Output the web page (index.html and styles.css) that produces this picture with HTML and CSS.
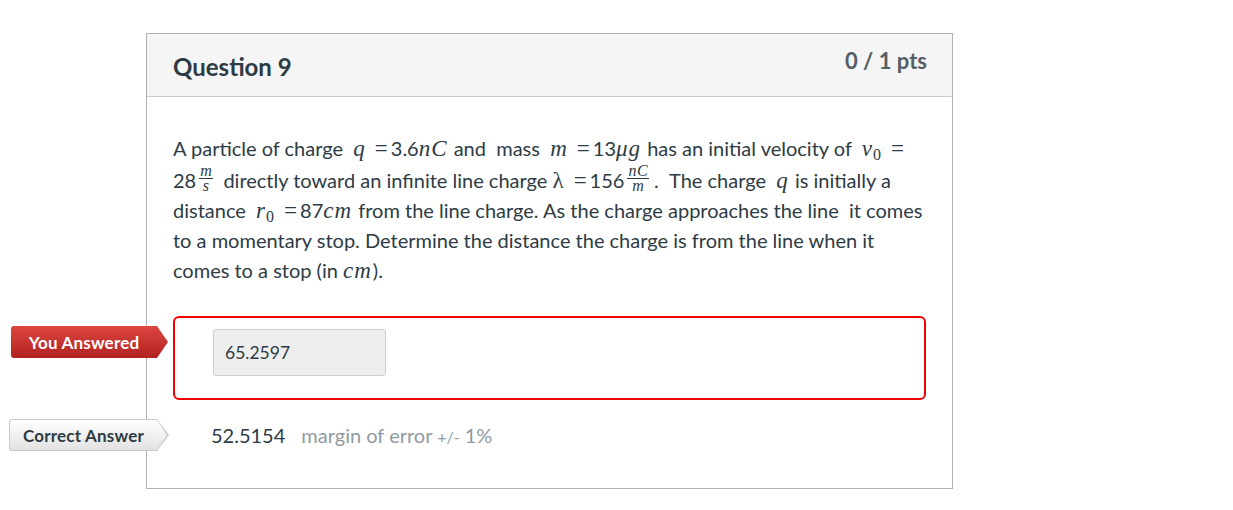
FILE: index.html
```html
<!DOCTYPE html>
<html>
<head>
<meta charset="utf-8">
<link rel="stylesheet" href="styles.css">
</head>
<body>
<div class="card">
  <div class="card-header">
    <h2 class="title">Question 9</h2>
    <div class="pts">0 / 1 pts</div>
  </div>
  <div class="card-body">
    <p class="question">A particle of charge &nbsp;<span class="m">q</span><span class="eq">=</span>3.6<span class="m">nC</span> and &nbsp;mass &nbsp;<span class="m">m</span><span class="eq">=</span>13<span class="m">μg</span> has an initial velocity of &nbsp;<span class="m">v<sub class="sub">0</sub></span><span class="eq">=</span><br>28<span class="frac"><span class="num m">m</span><span class="den m">s</span></span> directly toward an infinite line charge <span class="m up">λ</span><span class="eq">=</span>156<span class="frac"><span class="num m">nC</span><span class="den m">m</span></span>. &nbsp;The charge &nbsp;<span class="m">q</span> is initially a<br>distance &nbsp;<span class="m">r<sub class="sub">0</sub></span><span class="eq">=</span>87<span class="m">cm</span> from the line charge. As the charge approaches the line &nbsp;it comes<br>to a momentary stop. Determine the distance the charge is from the line when it<br>comes to a stop (in <span class="m">cm</span>).</p>

    <div class="answer-row">
      <span class="badge badge-wrong">You Answered</span>
      <div class="answer-box">
        <div class="input">65.2597</div>
      </div>
    </div>

    <div class="answer-row correct-row">
      <span class="badge badge-correct">Correct Answer</span>
      <div class="correct">
        <span class="value">52.5154</span>
        <span class="margin">margin of error <span class="pm">+/-</span> 1%</span>
      </div>
    </div>
  </div>
</div>
</body>
</html>
```

FILE: styles.css
```css
* { box-sizing: border-box; }
html, body { margin: 0; padding: 0; background: #fff; }
body {
  font-family: Lato, "Open Sans", sans-serif;
  color: #2d3b45;
  padding: 33px 0 0 146px;
}
.card {
  width: 807px;
  border: 1px solid #aeb2b5;
}
.card-header {
  display: flex;
  justify-content: space-between;
  align-items: flex-start;
  background: #f5f5f5;
  border-bottom: 1px solid #c7cdd1;
  height: 63px;
  padding: 0 25px 0 26px;
}
.title {
  margin: 0;
  font-size: 24px;
  font-weight: bold;
  line-height: 66px;
}
.pts {
  font-size: 22px;
  font-weight: bold;
  color: #555e65;
  margin-top: 13px;
}
.card-body {
  padding: 36px 26px 37px 26px;
}
.question {
  margin: 0;
  font-size: 20px;
  line-height: 30px;
  white-space: nowrap;
}
.m {
  font-family: "Liberation Serif", "DejaVu Serif", serif;
  font-style: italic;
  font-size: 23px;
  line-height: 1;
  letter-spacing: 1px;
  padding-right: 1px;
}
.up { font-style: normal; }
.eq {
  font-family: "Liberation Serif", serif;
  font-size: 23px;
  line-height: 1;
  margin: 0 3px 0 8px;
}
.sub {
  font-style: normal;
  font-size: 16px;
  vertical-align: -4px;
  line-height: 0;
}
.frac {
  display: inline-flex;
  flex-direction: column;
  align-items: center;
  vertical-align: 12px;
  margin: 0 5px 0 3px;
}
.frac .num, .frac .den {
  font-size: 16px;
  padding: 0 1px;
  letter-spacing: 0.5px;
}
.frac .num {
  line-height: 15px;
  border-bottom: 1px solid #2d3b45;
}
.frac .den {
  line-height: 14px;
}
.answer-row {
  position: relative;
}
.badge {
  position: absolute;
  left: -162px;
  height: 32px;
  width: 146px;
  display: flex;
  align-items: center;
  justify-content: center;
  font-size: 17px;
  letter-spacing: 0.2px;
  border-radius: 3px 0 0 3px;
}
.badge::after {
  content: "";
  position: absolute;
  right: -11px;
  top: 0;
  width: 11px;
  height: 32px;
  clip-path: polygon(0 0, 100% 50%, 0 100%);
}
.badge-wrong {
  top: 10px;
  color: #fff;
  font-weight: bold;
  background: linear-gradient(#dd4641, #b1221f);
}
.badge-wrong::after {
  background: linear-gradient(#dd4641, #b1221f);
}
.badge-correct {
  top: 0;
  left: -164px;
  width: 148px;
  color: #2d3b45;
  font-weight: bold;
  background: linear-gradient(#ffffff, #e2e2e2);
  border: 1px solid #c8c8c8;
  border-right: none;
}
.badge-correct::before {
  content: "";
  position: absolute;
  right: -12px;
  top: -1px;
  width: 12px;
  height: 32px;
  background: #c8c8c8;
  clip-path: polygon(0 0, 100% 50%, 0 100%);
}
.badge-correct::after {
  background: linear-gradient(#ffffff, #e2e2e2);
  right: -10px;
  top: 0;
  width: 10px;
  height: 30px;
}
.answer-box {
  margin-top: 31px;
  height: 84px;
  border: 2px solid #f00000;
  border-radius: 6px;
  padding: 11px 38px;
}
.input {
  width: 173px;
  height: 47px;
  background: #eeeeee;
  border: 1px solid #cfcfcf;
  border-radius: 3px;
  font-size: 17.5px;
  line-height: 45px;
  padding-left: 11px;
}
.correct-row {
  margin-top: 19px;
  height: 32px;
}
.correct {
  display: flex;
  align-items: center;
  height: 32px;
  padding-left: 38px;
  font-size: 20px;
}
.value { margin-right: 16px; }
.margin { color: #8f9aa2; }
.pm { font-size: 16px; }
```
